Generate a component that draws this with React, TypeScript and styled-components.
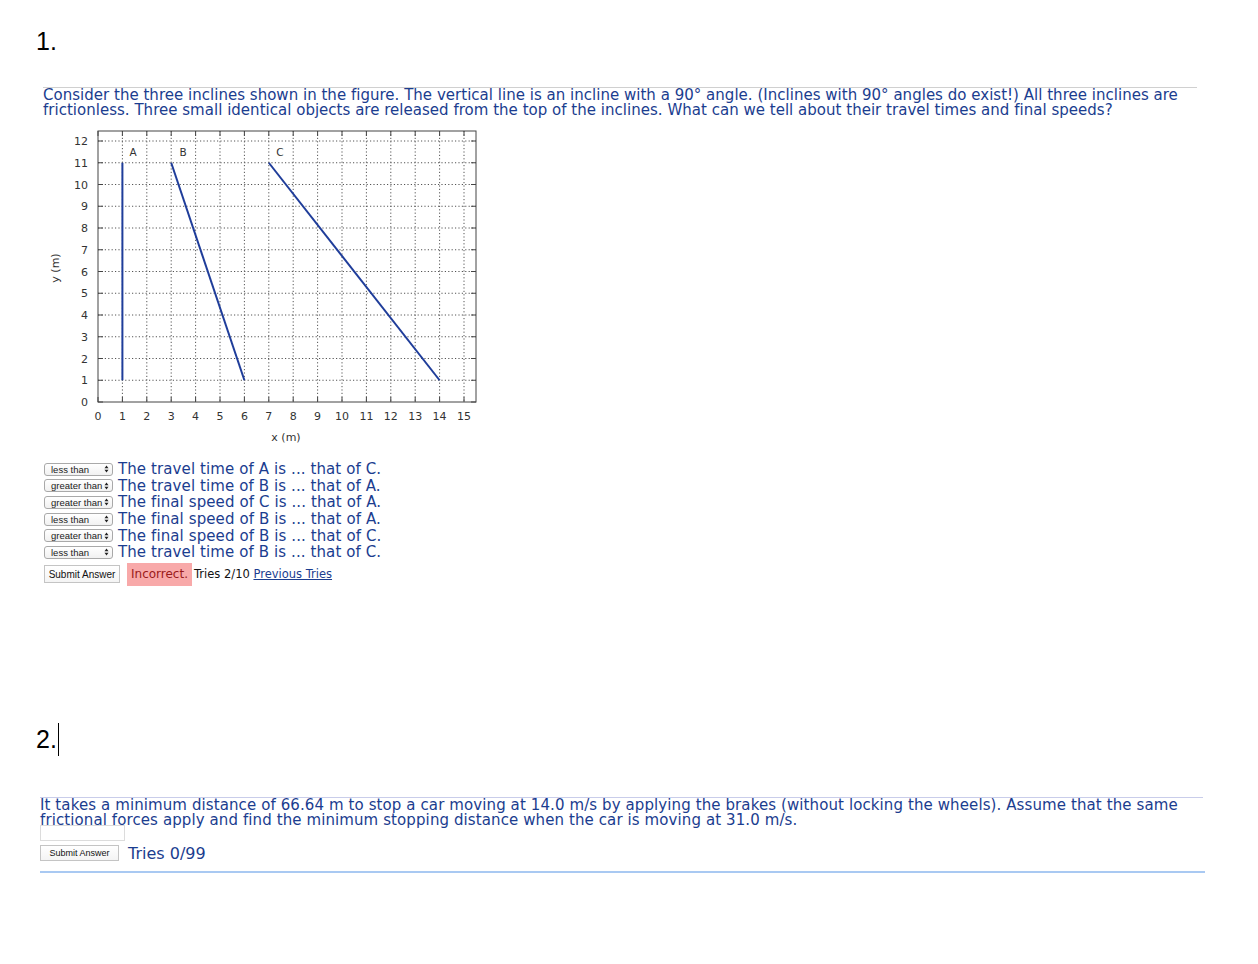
import React from "react";
import styled, { createGlobalStyle } from "styled-components";

const GlobalStyle = createGlobalStyle`
  body {
    margin: 0;
    background: #fff;
  }
`;

const BLUE = "#1b3d8f";

const Page = styled.div`
  width: 1258px;
  box-sizing: border-box;
  padding: 27px 0 60px 40px;
`;

const Heading = styled.div<{ $top?: number }>`
  font-family: "Liberation Sans", Arial, sans-serif;
  font-size: 25px;
  line-height: 28px;
  color: #000;
  margin-left: -4px;
  margin-top: ${({ $top }) => $top ?? 0}px;
  display: flex;
  align-items: center;
`;

const Cursor = styled.span`
  display: inline-block;
  width: 1.5px;
  height: 33px;
  background: #000;
  margin-left: 1px;
`;

const Problem = styled.div<{ $top: number; $left: number; $width: number; $rule: string }>`
  margin-top: ${({ $top }) => $top}px;
  margin-left: ${({ $left }) => $left}px;
  width: ${({ $width }) => $width}px;
  border-top: 1px solid ${({ $rule }) => $rule};
`;

const Prompt = styled.div<{ $ls: number }>`
  font-family: "DejaVu Sans", Verdana, sans-serif;
  font-size: 15px;
  line-height: 15px;
  letter-spacing: ${({ $ls }) => $ls}px;
  color: ${BLUE};
  white-space: nowrap;
`;

const Chart = styled.svg`
  display: block;
  margin-top: 7px;
  margin-left: -3px;
`;

const Answers = styled.div`
  margin-top: 16px;
  margin-left: 1px;
  display: flex;
  flex-direction: column;
`;

const Row = styled.div`
  display: flex;
  align-items: center;
  gap: 5px;
  height: 16.6px;
`;

const FakeSelect = styled.div`
  box-sizing: border-box;
  width: 69px;
  height: 13px;
  border: 1px solid #a9a9a9;
  border-radius: 3px;
  background: linear-gradient(#ffffff, #f1f1f1);
  display: flex;
  align-items: center;
  justify-content: space-between;
  padding: 0 3px 0 6px;
  font-family: "Liberation Sans", Arial, sans-serif;
  font-size: 9.5px;
  color: #222;
  white-space: nowrap;
`;

const Statement = styled.span`
  font-family: "DejaVu Sans", Verdana, sans-serif;
  font-size: 15px;
  line-height: 16px;
  letter-spacing: 0.1px;
  color: ${BLUE};
  white-space: nowrap;
`;

const SubmitRow = styled.div<{ $top: number }>`
  display: flex;
  align-items: center;
  margin-top: ${({ $top }) => $top}px;
`;

const Button = styled.div<{ $w: number; $h: number; $fs: number }>`
  box-sizing: border-box;
  width: ${({ $w }) => $w}px;
  height: ${({ $h }) => $h}px;
  border: 1px solid #c4c4c4;
  background: linear-gradient(#ffffff, #f4f4f4);
  display: flex;
  align-items: center;
  justify-content: center;
  font-family: "Liberation Sans", Arial, sans-serif;
  font-size: ${({ $fs }) => $fs}px;
  color: #111;
  white-space: nowrap;
`;

const Verdict = styled.div`
  margin-left: 7px;
  height: 23px;
  padding: 0 4px;
  display: flex;
  align-items: center;
  background: #f8a9a9;
  color: #9a1a1a;
  font-family: "DejaVu Sans", Verdana, sans-serif;
  font-size: 12px;
`;

const Tries = styled.span<{ $fs: number; $color: string; $gap: number }>`
  margin-left: ${({ $gap }) => $gap}px;
  font-family: "DejaVu Sans", Verdana, sans-serif;
  font-size: ${({ $fs }) => $fs}px;
  color: ${({ $color }) => $color};
  white-space: nowrap;
`;

const Link = styled.span`
  color: ${BLUE};
  text-decoration: underline;
`;

const AnswerInput = styled.div`
  box-sizing: border-box;
  width: 85px;
  height: 16px;
  border: 1px solid #dcdcdc;
  margin-top: -3px;
`;

const BottomRule = styled.div`
  width: 1165px;
  height: 2px;
  background: #a9c9f2;
  margin-top: 8px;
`;

const Arrows = () => (
  <svg width="5" height="8" viewBox="0 0 5 8">
    <path d="M2.5 0.5 L4.5 3.2 L0.5 3.2 Z M2.5 7.5 L4.5 4.8 L0.5 4.8 Z" fill="#222" />
  </svg>
);

const X0 = 58;
const Y0 = 277;
const DX = 24.4;
const DY = 21.75;
const px = (x: number) => X0 + DX * x;
const py = (y: number) => Y0 - DY * y;
const LEFT = 58;
const RIGHT = 436;
const TOP = 6;
const BOTTOM = 277;

const InclineChart = () => {
  const xs = Array.from({ length: 16 }, (_, i) => i);
  const ys = Array.from({ length: 13 }, (_, i) => i);
  const labelFont = { fontFamily: "'DejaVu Sans', Verdana, sans-serif", fontSize: 11, fill: "#333" };
  return (
    <Chart width="450" height="320" viewBox="0 0 450 320">
      {xs.slice(1).map((i) => (
        <line key={"gx" + i} x1={px(i)} y1={TOP} x2={px(i)} y2={BOTTOM} stroke="#555" strokeWidth="1" strokeDasharray="1.2 2.2" />
      ))}
      {ys.slice(1).map((j) => (
        <line key={"gy" + j} x1={LEFT} y1={py(j)} x2={RIGHT} y2={py(j)} stroke="#555" strokeWidth="1" strokeDasharray="1.2 2.2" />
      ))}
      {xs.map((i) => (
        <g key={"tx" + i}>
          <line x1={px(i)} y1={BOTTOM} x2={px(i)} y2={BOTTOM - 5} stroke="#444" />
          <line x1={px(i)} y1={TOP} x2={px(i)} y2={TOP + 5} stroke="#444" />
          <text x={px(i)} y={295} textAnchor="middle" {...labelFont}>{i}</text>
        </g>
      ))}
      {ys.map((j) => (
        <g key={"ty" + j}>
          <line x1={LEFT} y1={py(j)} x2={LEFT + 5} y2={py(j)} stroke="#444" />
          <line x1={RIGHT} y1={py(j)} x2={RIGHT - 5} y2={py(j)} stroke="#444" />
          <text x={48} y={py(j) + 4} textAnchor="end" {...labelFont}>{j}</text>
        </g>
      ))}
      <rect x={LEFT} y={TOP} width={RIGHT - LEFT} height={BOTTOM - TOP} fill="none" stroke="#444" strokeWidth="1" />
      <text x={93} y={31} textAnchor="middle" {...labelFont} fontSize={10.5}>A</text>
      <text x={143} y={31} textAnchor="middle" {...labelFont} fontSize={10.5}>B</text>
      <text x={240} y={31} textAnchor="middle" {...labelFont} fontSize={10.5}>C</text>
      <line x1={px(1)} y1={py(11)} x2={px(1)} y2={py(1)} stroke="#1f3d9a" strokeWidth="2" />
      <line x1={px(3)} y1={py(11)} x2={px(6)} y2={py(1)} stroke="#1f3d9a" strokeWidth="2" />
      <line x1={px(7)} y1={py(11)} x2={px(14)} y2={py(1)} stroke="#1f3d9a" strokeWidth="2" />
      <text x={246} y={316} textAnchor="middle" {...labelFont}>x (m)</text>
      <text x={0} y={0} textAnchor="middle" transform="translate(19 143) rotate(-90)" {...labelFont}>y (m)</text>
    </Chart>
  );
};

const answers = [
  ["less than", "The travel time of A is ... that of C."],
  ["greater than", "The travel time of B is ... that of A."],
  ["greater than", "The final speed of C is ... that of A."],
  ["less than", "The final speed of B is ... that of A."],
  ["greater than", "The final speed of B is ... that of C."],
  ["less than", "The travel time of B is ... that of C."],
];

export default function App() {
  return (
    <Page>
      <GlobalStyle />
      <Heading>1.</Heading>
      <Problem $top={32} $left={3} $width={1154} $rule="#d0d0d0">
        <Prompt $ls={0.02}>
          Consider the three inclines shown in the figure. The vertical line is an incline with a 90° angle. (Inclines with 90° angles do exist!) All three inclines are
          <br />
          frictionless. Three small identical objects are released from the top of the inclines. What can we tell about their travel times and final speeds?
        </Prompt>
        <InclineChart />
        <Answers>
          {answers.map(([choice, text], i) => (
            <Row key={i}>
              <FakeSelect>
                <span>{choice}</span>
                <Arrows />
              </FakeSelect>
              <Statement>{text}</Statement>
            </Row>
          ))}
        </Answers>
        <SubmitRow $top={2}>
          <Button $w={76} $h={18} $fs={10} style={{ marginLeft: 1 }}>Submit Answer</Button>
          <Verdict>Incorrect.</Verdict>
          <Tries $fs={11.5} $color="#111" $gap={2}>
            Tries 2/10 <Link>Previous Tries</Link>
          </Tries>
        </SubmitRow>
      </Problem>

      <Heading $top={137}>
        2.<Cursor />
      </Heading>
      <Problem $top={41} $left={0} $width={1163} $rule="#c9cdea">
        <Prompt $ls={0.1}>
          It takes a minimum distance of 66.64 m to stop a car moving at 14.0 m/s by applying the brakes (without locking the wheels). Assume that the same
          <br />
          frictional forces apply and find the minimum stopping distance when the car is moving at 31.0 m/s.
        </Prompt>
        <AnswerInput />
        <SubmitRow $top={3}>
          <Button $w={79} $h={16} $fs={9}>Submit Answer</Button>
          <Tries $fs={16} $color={BLUE} $gap={9}>Tries 0/99</Tries>
        </SubmitRow>
      </Problem>
      <BottomRule />
    </Page>
  );
}
